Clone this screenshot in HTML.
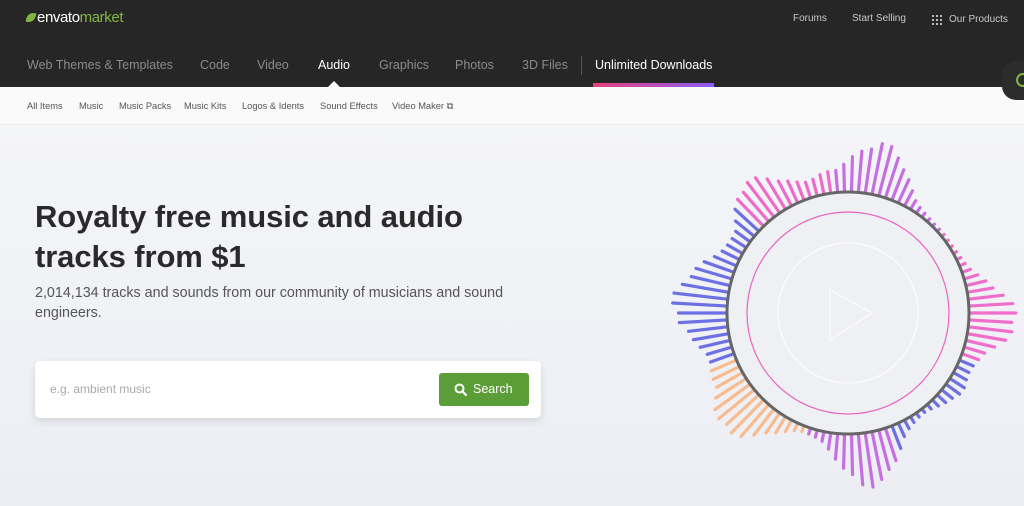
<!DOCTYPE html>
<html><head><meta charset="utf-8"><style>
*{margin:0;padding:0;box-sizing:border-box}
body{width:1024px;height:506px;overflow:hidden;font-family:"Liberation Sans",sans-serif;background:#f0f1f5;position:relative}
.top{position:absolute;left:0;top:0;width:1024px;height:87px;background:#262626}
.logo{position:absolute;left:27px;top:9px;font-size:15px;color:#fff;letter-spacing:-0.4px}
.logo b{font-weight:normal}.logo span{color:#82b541}
.leaf{display:inline-block;width:8px;height:11px;background:#82b541;border-radius:8px 1px 8px 1px;transform:rotate(20deg);margin-right:2px;vertical-align:-1px}
.tr{position:absolute;top:13px;font-size:10px;color:#c8c8c8}
.nav{position:absolute;top:58px;font-size:12.5px;color:#8a8a8a}
.nav.a{color:#fff}
.tri{position:absolute;left:328px;top:81px;width:0;height:0;border-left:6px solid transparent;border-right:6px solid transparent;border-bottom:6px solid #fafafa}
.sep{position:absolute;left:581px;top:56px;width:1px;height:19px;background:#555}
.ul{position:absolute;left:593px;top:83px;width:121px;height:4px;background:linear-gradient(90deg,#e8407a,#8b5cf6)}
.sub{position:absolute;left:0;top:87px;width:1024px;height:38px;background:#fafafa;border-bottom:1px solid #ececec}
.s{position:absolute;top:101px;font-size:9.3px;color:#555}
.hero{position:absolute;left:0;top:125px;width:1024px;height:381px;background:linear-gradient(180deg,#f4f5f8,#eceef4)}
h1{position:absolute;left:35px;top:197px;font-size:31px;line-height:40px;color:#2a2a2a;font-weight:bold;letter-spacing:-0.1px}
.p{position:absolute;left:35px;top:283px;font-size:14.3px;line-height:20px;color:#555;width:480px}
.box{position:absolute;left:35px;top:361px;width:506px;height:57px;background:#fff;border-radius:5px;box-shadow:0 3px 8px rgba(0,0,0,.12)}
.ph{position:absolute;left:15px;top:21px;font-size:12px;color:#aaa}
.btn{position:absolute;left:404px;top:12px;width:90px;height:33px;background:#5b9e37;border-radius:3px;color:#fff;font-size:12.5px;line-height:33px;padding-left:34px}
.corner{position:absolute;left:1002px;top:61px;width:40px;height:39px;border-radius:14px;background:#2c2c2c}
</style></head><body>
<div class="top">
<div class="logo"><i class="leaf"></i><b>envato</b><span>market</span></div>
<div class="tr" style="left:793px">Forums</div>
<div class="tr" style="left:852px">Start Selling</div>
<svg style="position:absolute;left:932px;top:15px" width="10" height="10"><g fill="#bbb"><rect x="0" y="0" width="2" height="2"/><rect x="4" y="0" width="2" height="2"/><rect x="8" y="0" width="2" height="2"/><rect x="0" y="4" width="2" height="2"/><rect x="4" y="4" width="2" height="2"/><rect x="8" y="4" width="2" height="2"/><rect x="0" y="8" width="2" height="2"/><rect x="4" y="8" width="2" height="2"/><rect x="8" y="8" width="2" height="2"/></g></svg>
<div class="tr" style="left:949px;top:14px">Our Products</div>
<div class="nav" style="left:27px">Web Themes &amp; Templates</div>
<div class="nav" style="left:200px">Code</div>
<div class="nav" style="left:257px">Video</div>
<div class="nav a" style="left:318px">Audio</div>
<div class="nav" style="left:379px">Graphics</div>
<div class="nav" style="left:455px">Photos</div>
<div class="nav" style="left:522px">3D Files</div>
<div class="sep"></div>
<div class="nav a" style="left:595px">Unlimited Downloads</div>
<div class="ul"></div>
</div>
<div class="sub"></div>
<div class="tri"></div>
<div class="s" style="left:27px">All Items</div>
<div class="s" style="left:79px">Music</div>
<div class="s" style="left:119px">Music Packs</div>
<div class="s" style="left:184px">Music Kits</div>
<div class="s" style="left:242px">Logos &amp; Idents</div>
<div class="s" style="left:320px">Sound Effects</div>
<div class="s" style="left:392px">Video Maker &#x29C9;</div>
<div class="hero"></div>
<div class="corner"><div style="position:absolute;left:14px;top:12px;width:14px;height:14px;border:2px solid #82b541;border-radius:50%"></div></div>
<h1>Royalty free music and audio<br>tracks from $1</h1>
<div class="p">2,014,134 tracks and sounds from our community of musicians and sound engineers.</div>
<div class="box"><div class="ph">e.g. ambient music</div>
<div class="btn"><svg style="position:absolute;left:15px;top:10px" width="13" height="13" viewBox="0 0 13 13"><circle cx="5.5" cy="5.5" r="4" fill="none" stroke="#fff" stroke-width="2"/><path d="M8.5 8.5L12 12" stroke="#fff" stroke-width="2.2" stroke-linecap="round"/></svg>Search</div></div>
<svg id="viz" style="position:absolute;left:0;top:0" width="1024" height="506"></svg>
<script>
var s=document.getElementById('viz'),cx=848,cy=313,R=121,out='';
var peaks=[[2,46,11],[-78,50,10],[-128,42,11],[182,52,11],[137,46,11],[82,52,10],[35,14,8],[-100,12,7],[-160,14,8],[158,12,8]];
function col(a){a=((a%360)+360)%360;
if(a<20||a>=320)return '#ef6dcb';
if(a<72)return '#6d70e3';
if(a<110)return '#c56fe0';
if(a<160)return '#f8bb90';
if(a<224)return '#6d70e3';
if(a<264)return '#ee6cc9';
return '#c56fe0';}
var N=110;
for(var i=0;i<N;i++){var a=i*360/N-180;var L=3;
for(var p of peaks){var d=a-p[0];d=((d+540)%360)-180;L+=p[1]*Math.exp(-d*d/(2*p[2]*p[2]))}
L=Math.min(L,58)*(0.88+0.12*Math.abs(Math.sin(i*2.3)));
var r=a*Math.PI/180,c=Math.cos(r),n=Math.sin(r);
out+='<line x1="'+(cx+c*(R-2))+'" y1="'+(cy+n*(R-2))+'" x2="'+(cx+c*(R+L))+'" y2="'+(cy+n*(R+L))+'" stroke="'+col(a)+'" stroke-width="3.2" stroke-linecap="round"/>';}
out+='<circle cx="'+cx+'" cy="'+cy+'" r="'+R+'" fill="#eff0f4" stroke="#666" stroke-width="3"/>';
out+='<circle cx="'+cx+'" cy="'+cy+'" r="101" fill="none" stroke="#e763c0" stroke-width="1.2"/>';
out+='<circle cx="'+cx+'" cy="'+cy+'" r="70" fill="none" stroke="#fafafa" stroke-width="1.5"/>';
out+='<path d="M830 290 L872 313 L830 340 Z" fill="none" stroke="#f8f8f8" stroke-width="2" stroke-linejoin="round"/>';
s.innerHTML=out;
</script>
</body></html>
